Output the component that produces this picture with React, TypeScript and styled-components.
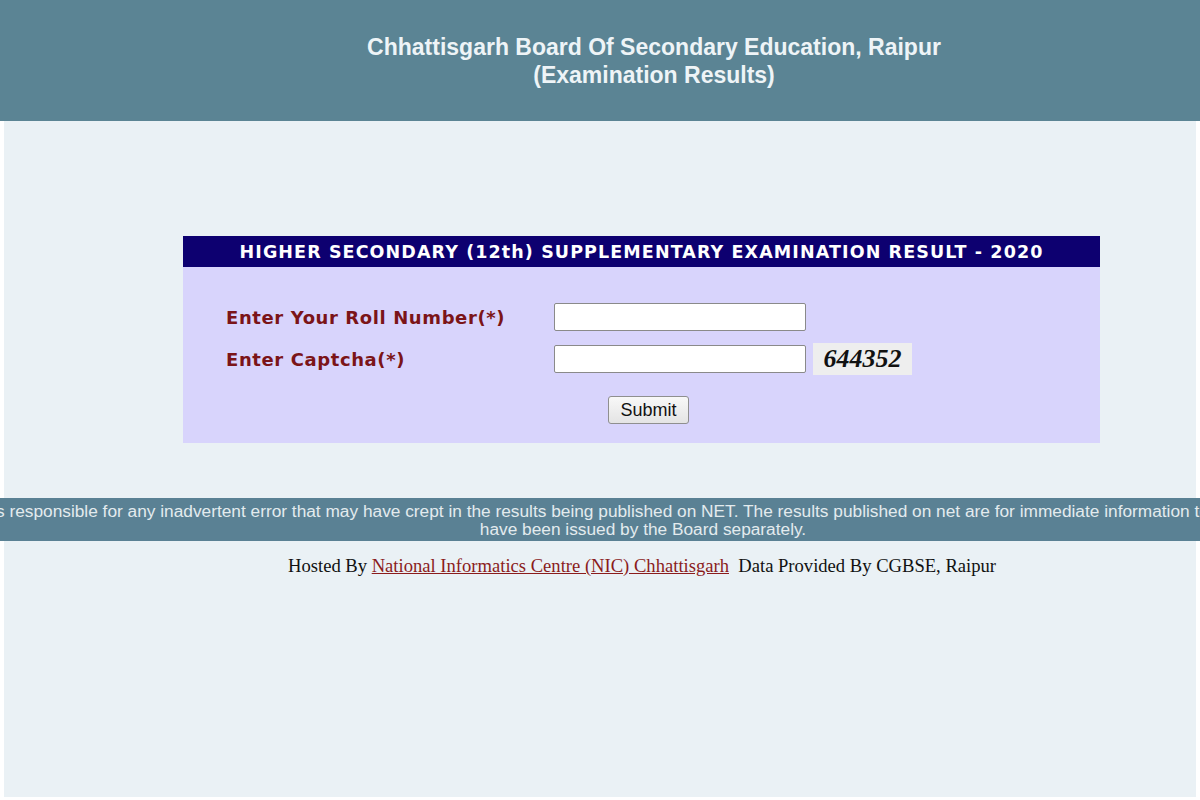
import styled, { createGlobalStyle } from 'styled-components';

const GlobalStyle = createGlobalStyle`
    html, body {
        margin: 0;
        padding: 0;
        background: #ffffff;
    }
    body {
        font-family: "Liberation Sans", Arial, sans-serif;
    }
`;

const Page = styled.div`
    width: 1200px;
    height: 800px;
    overflow: hidden;
    display: flex;
    flex-direction: column;
`;

const Header = styled.header`
    height: 121px;
    background: #5b8494;
    display: flex;
    flex-direction: column;
    justify-content: center;
    align-items: center;
    padding-left: 108px;
    color: #eef4f7;
    font-weight: bold;
    font-size: 23px;
    line-height: 28px;
`;

const Body = styled.main`
    flex: 1;
    margin: 0 4px 3px 4px;
    background: #eaf1f5;
    display: flex;
    flex-direction: column;
    padding-top: 115px;
`;

const Panel = styled.section`
    width: 917px;
    margin-left: 179px;
    background: #d8d4fc;
`;

const PanelTitle = styled.div`
    height: 31px;
    background: #0d0070;
    color: #ffffff;
    font-family: "DejaVu Sans", Verdana, sans-serif;
    font-weight: bold;
    font-size: 17.5px;
    letter-spacing: 1.1px;
    white-space: nowrap;
    display: flex;
    align-items: center;
    justify-content: center;
`;

const Form = styled.div`
    padding: 36px 0 19px 43px;
    display: grid;
    grid-template-columns: 328px auto;
    row-gap: 12px;
    align-items: center;
`;

const Label = styled.label`
    color: #7b1418;
    font-family: "DejaVu Sans", Verdana, sans-serif;
    font-weight: bold;
    font-size: 18px;
    letter-spacing: 0.6px;
    white-space: nowrap;
`;

const FieldRow = styled.div`
    display: flex;
    align-items: center;
    gap: 7px;
`;

const TextInput = styled.input`
    width: 252px;
    height: 28px;
    box-sizing: border-box;
    border: 1px solid #8a8a8a;
    border-radius: 2px;
    background: #ffffff;
    padding: 2px 4px;
    font-size: 14px;
`;

const Captcha = styled.span`
    width: 99px;
    height: 32px;
    background: #eeeeee;
    display: flex;
    align-items: center;
    justify-content: center;
    font-family: "Liberation Serif", "Times New Roman", serif;
    font-style: italic;
    font-weight: bold;
    font-size: 26px;
    color: #111111;
`;

const Actions = styled.div`
    grid-column: 1 / span 2;
    display: flex;
    justify-content: center;
    padding-right: 43px;
    margin-top: 9px;
`;

const SubmitButton = styled.button`
    width: 81px;
    height: 28px;
    padding: 0;
    font-family: "Liberation Sans", Arial, sans-serif;
    font-size: 18px;
    color: #111111;
    background: linear-gradient(#f8f8f8, #e4e4e4);
    border: 1px solid #8f8f8f;
    border-radius: 3px;
    margin-left: 14px;
`;

const Notice = styled.div`
    margin-top: 55px;
    margin-left: -4px;
    margin-right: -4px;
    height: 43px;
    background: #5a8194;
    color: #e3ebee;
    font-size: 17.3px;
    line-height: 18px;
    overflow: hidden;
    display: flex;
    flex-direction: column;
    align-items: center;
    justify-content: center;
`;

const NoticeLine = styled.div<{ $offset?: number }>`
    white-space: nowrap;
    align-self: ${(p) => (p.$offset !== undefined ? 'flex-start' : 'center')};
    margin-left: ${(p) => (p.$offset !== undefined ? `${p.$offset}px` : '0')};
    padding-left: ${(p) => (p.$offset !== undefined ? '0' : '86px')};
`;

const Credits = styled.div`
    margin-top: 14px;
    padding-left: 84px;
    text-align: center;
    font-family: "Liberation Serif", "Times New Roman", serif;
    font-size: 18.6px;
    color: #111111;

    a {
        color: #8b1c1c;
        text-decoration: underline;
    }
`;

export default function App() {
    return (
        <>
            <GlobalStyle />
            <Page>
                <Header>
                    <div>Chhattisgarh Board Of Secondary Education, Raipur</div>
                    <div>(Examination Results)</div>
                </Header>
                <Body>
                    <Panel>
                        <PanelTitle>HIGHER SECONDARY (12th) SUPPLEMENTARY EXAMINATION RESULT - 2020</PanelTitle>
                        <Form>
                            <Label htmlFor="roll">Enter Your Roll Number(*)</Label>
                            <FieldRow>
                                <TextInput id="roll" type="text" />
                            </FieldRow>
                            <Label htmlFor="captcha">Enter Captcha(*)</Label>
                            <FieldRow>
                                <TextInput id="captcha" type="text" />
                                <Captcha>644352</Captcha>
                            </FieldRow>
                            <Actions>
                                <SubmitButton type="button">Submit</SubmitButton>
                            </Actions>
                        </Form>
                    </Panel>
                    <Notice>
                        <NoticeLine $offset={-198}>
                            Neither NIC nor CGBSE is responsible for any inadvertent error that may have crept in the results being published on NET. The results published on net are for immediate information to the examinees.
                        </NoticeLine>
                        <NoticeLine>have been issued by the Board separately.</NoticeLine>
                    </Notice>
                    <Credits>
                        Hosted By <a href="#">National Informatics Centre (NIC) Chhattisgarh</a>&nbsp; Data Provided By CGBSE, Raipur
                    </Credits>
                </Body>
            </Page>
        </>
    );
}
